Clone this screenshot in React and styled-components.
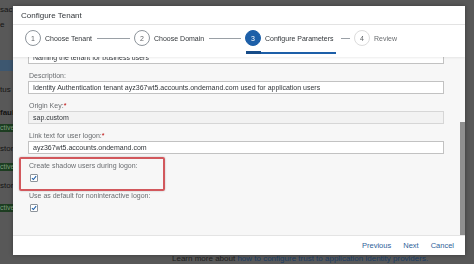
import styled, { createGlobalStyle } from 'styled-components';

const GlobalStyle = createGlobalStyle`
  html, body {
    margin: 0;
    padding: 0;
  }
  body {
    background: #585858;
    font-family: "Liberation Sans", Arial, sans-serif;
    overflow: hidden;
  }
`;

const Page = styled.div`
  width: 474px;
  height: 264px;
  display: flex;
  flex-direction: column;
`;

const SideList = styled.div`
  width: 16px;
  display: flex;
  flex-direction: column;
  padding-top: 5px;
`;

const SideRow = styled.div`
  margin-top: ${(p) => p.$gap}px;
  height: 10px;
  line-height: 10px;
  font-size: 8px;
  color: #141414;
  font-weight: ${(p) => (p.$bold ? 700 : 400)};
  white-space: nowrap;
`;

const SideBlock = styled.div`
  margin-top: ${(p) => p.$gap}px;
  height: 11px;
  background: #3d5770;
`;

const SideBadge = styled.div`
  margin-top: ${(p) => p.$gap}px;
  height: 8px;
  line-height: 8px;
  font-size: 7px;
  background: #1d3d21;
  color: #7c9c7c;
  white-space: nowrap;
  overflow: hidden;
`;

const BottomNote = styled.div`
  margin-top: auto;
  padding-left: 172px;
  height: 10px;
  line-height: 10px;
  font-size: 8px;
  color: #1e1e1e;
  white-space: nowrap;

  a {
    color: #1b3c63;
    text-decoration: none;
  }
`;

const Dialog = styled.div`
  position: fixed;
  left: 13px;
  top: 6px;
  width: 452px;
  height: 249px;
  background: #ffffff;
  display: flex;
  flex-direction: column;
  box-shadow: 0 0 4px rgba(0, 0, 0, 0.35);
  overflow: hidden;
`;

const Header = styled.div`
  box-sizing: border-box;
  height: 19px;
  flex: none;
  display: flex;
  align-items: center;
  padding: 0 8px;
  border-bottom: 1px solid #e4e4e4;
  font-size: 8px;
  color: #32363a;
`;

const StepBar = styled.div`
  box-sizing: border-box;
  height: 32px;
  flex: none;
  display: flex;
  align-items: flex-start;
  padding: 5px 0 0 12px;
  background: #ffffff;
  box-shadow: 0 1px 2px rgba(0, 0, 0, 0.08);
  position: relative;
  z-index: 1;
`;

const Step = styled.div`
  width: ${(p) => (p.$width ? `${p.$width}px` : 'auto')};
  display: flex;
  align-items: flex-start;
`;

const StepMain = styled.div`
  display: flex;
  flex-direction: column;
`;

const StepHead = styled.div`
  display: flex;
  align-items: center;
  height: 16px;
`;

const Circle = styled.div`
  box-sizing: border-box;
  width: 16px;
  height: 16px;
  border-radius: 50%;
  display: flex;
  align-items: center;
  justify-content: center;
  font-size: 7px;
  border: 1px solid ${(p) => (p.$active ? '#1d5fa8' : p.$muted ? '#dcdcdc' : '#8d949b')};
  background: ${(p) => (p.$active ? '#1d5fa8' : '#ffffff')};
  color: ${(p) => (p.$active ? '#ffffff' : '#5e6266')};
`;

const StepLabel = styled.span`
  margin-left: 4px;
  font-size: 7px;
  color: ${(p) => (p.$muted ? '#6a6d70' : '#32363a')};
  white-space: nowrap;
`;

const StepLine = styled.div`
  flex: 1;
  height: 1px;
  margin: 7.5px 4px 0 5px;
  background: #9aa0a6;
`;

const ActiveBar = styled.div`
  margin: 6px 0 0 1px;
  height: 2px;
  width: 90px;
  background: #1d5fa8;

  &::before {
    content: '';
    display: block;
    width: 15px;
    height: 3px;
    margin-top: -1px;
    background: #174c88;
  }
`;

const Content = styled.div`
  flex: 1;
  display: flex;
  background: #f7f7f7;
  overflow: hidden;
`;

const Form = styled.div`
  flex: 1;
  display: flex;
  flex-direction: column;
  padding: 0 16px 0 15px;
`;

const Field = styled.div`
  display: flex;
  flex-direction: column;
  position: relative;

  ${(p) =>
    p.$highlight &&
    `
    &::after {
      content: '';
      position: absolute;
      left: -9px;
      top: 3px;
      width: 146px;
      height: 34px;
      box-sizing: border-box;
      border: 2px solid #d2585d;
      border-radius: 2px;
      box-shadow: 0 0 2px rgba(0, 0, 0, 0.25);
    }
  `}
`;

const Label = styled.div`
  margin: 6px 0 0 1px;
  height: 11px;
  line-height: 11px;
  font-size: 7px;
  color: #6a6d70;
  white-space: nowrap;

  b {
    font-weight: 400;
    color: #bb0000;
  }
`;

const Input = styled.div`
  box-sizing: border-box;
  height: 13px;
  margin-top: ${(p) => (p.$offset ? `${p.$offset}px` : '0')};
  padding: 0 4px;
  display: flex;
  align-items: center;
  border: 1px solid ${(p) => (p.$readOnly ? '#d6d6d6' : '#c2c2c2')};
  background: ${(p) => (p.$readOnly ? '#f2f2f2' : '#ffffff')};
  font-size: 7px;
  color: #32363a;
  white-space: nowrap;
  overflow: hidden;
`;

const CheckRow = styled.div`
  height: 13px;
  display: flex;
  align-items: center;
  padding-left: 2px;
`;

const CheckBox = styled.div`
  box-sizing: border-box;
  width: 8px;
  height: 8px;
  border: 1px solid #8d949b;
  border-radius: 1px;
  background: #ffffff;
  display: flex;
  align-items: center;
  justify-content: center;
`;

const ScrollTrack = styled.div`
  width: 5px;
  flex: none;
  display: flex;
  flex-direction: column;
`;

const ScrollThumb = styled.div`
  margin-top: 65px;
  flex: 1;
  background: #8f8f8f;
`;

const Footer = styled.div`
  box-sizing: border-box;
  height: 20px;
  flex: none;
  display: flex;
  align-items: center;
  justify-content: flex-end;
  gap: 12px;
  padding-right: 11px;
  border-top: 1px solid #e4e4e4;
  background: #ffffff;
`;

const FooterButton = styled.button`
  background: none;
  border: none;
  padding: 0;
  font-family: inherit;
  font-size: 7.5px;
  color: #2f5f99;
  cursor: pointer;
`;

function Check() {
  return (
    <CheckBox>
      <svg width="6" height="6" viewBox="0 0 10 10">
        <path d="M1.5 5.2 L4 7.6 L8.6 2" fill="none" stroke="#1d5fa8" strokeWidth="1.8" />
      </svg>
    </CheckBox>
  );
}

const steps = [
  { n: 1, label: 'Choose Tenant', width: 109 },
  { n: 2, label: 'Choose Domain', width: 111 },
  { n: 3, label: 'Configure Parameters', width: 109, active: true },
  { n: 4, label: 'Review', muted: true },
];

function App() {
  return (
    <>
      <GlobalStyle />
      <Page>
        <SideList>
          <SideRow $gap={0}>sac</SideRow>
          <SideRow $gap={5}>e</SideRow>
          <SideBlock $gap={30} />
          <SideRow $gap={14}>tus</SideRow>
          <SideRow $gap={13} $bold>faul</SideRow>
          <SideBadge $gap={6}>ctive</SideBadge>
          <SideRow $gap={12}>stor</SideRow>
          <SideBadge $gap={9}>ctive</SideBadge>
          <SideRow $gap={10}>stor</SideRow>
          <SideBadge $gap={13}>ctive</SideBadge>
        </SideList>
        <BottomNote>
          Learn more about <a href="#">how to configure trust to application identity providers.</a>
        </BottomNote>
      </Page>

      <Dialog>
        <Header>Configure Tenant</Header>
        <StepBar>
          {steps.map((s, i) => (
            <Step key={s.n} $width={s.width}>
              <StepMain>
                <StepHead>
                  <Circle $active={s.active} $muted={s.muted}>{s.n}</Circle>
                  <StepLabel $muted={s.muted}>{s.label}</StepLabel>
                </StepHead>
                {s.active && <ActiveBar />}
              </StepMain>
              {i < steps.length - 1 && <StepLine />}
            </Step>
          ))}
        </StepBar>
        <Content>
          <Form>
            <Field>
              <Input $offset={-6}>Naming the tenant for business users</Input>
            </Field>
            <Field>
              <Label>Description:</Label>
              <Input>Identity Authentication tenant ayz367wt5.accounts.ondemand.com used for application users</Input>
            </Field>
            <Field>
              <Label>Origin Key:<b>*</b></Label>
              <Input $readOnly>sap.custom</Input>
            </Field>
            <Field>
              <Label>Link text for user logon:<b>*</b></Label>
              <Input>ayz367wt5.accounts.ondemand.com</Input>
            </Field>
            <Field $highlight>
              <Label>Create shadow users during logon:</Label>
              <CheckRow>
                <Check />
              </CheckRow>
            </Field>
            <Field>
              <Label>Use as default for noninteractive logon:</Label>
              <CheckRow>
                <Check />
              </CheckRow>
            </Field>
          </Form>
          <ScrollTrack>
            <ScrollThumb />
          </ScrollTrack>
        </Content>
        <Footer>
          <FooterButton>Previous</FooterButton>
          <FooterButton>Next</FooterButton>
          <FooterButton>Cancel</FooterButton>
        </Footer>
      </Dialog>
    </>
  );
}

export default App;
